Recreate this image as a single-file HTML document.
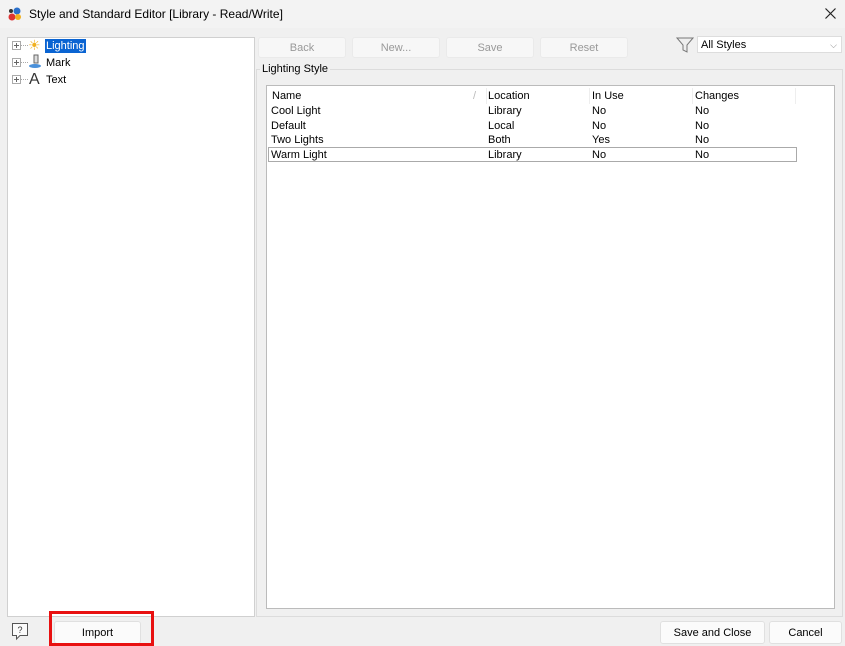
<!DOCTYPE html><html><head><style>
body{margin:0;width:845px;height:646px;background:#f0f0f0;font-family:"Liberation Sans",sans-serif;font-size:11px;color:#000;position:relative;overflow:hidden}
.a{position:absolute}
.btn{position:absolute;background:#fbfbfb;border:1px solid #e0e0e0;border-radius:3px;text-align:center;line-height:20px;box-sizing:border-box}
.dis{background:#f7f7f7;color:#999;border-color:#eaeaea}
.row{position:absolute;left:5px;height:14px;line-height:14px;width:600px}
.row span{position:absolute}
.pl{position:absolute;width:7px;height:7px;border:1px solid #aaa;background:#fff}
.pl:after{content:"";position:absolute;left:1px;top:3px;width:5px;height:1px;background:#666}
.pl:before{content:"";position:absolute;left:3px;top:1px;width:1px;height:5px;background:#666}
</style></head><body>
<div class="a" style="left:0;top:0;width:845px;height:28px;background:#f3f3f3"></div>
<svg class="a" style="left:7px;top:6px" width="16" height="16"><circle cx="5" cy="11" r="3.5" fill="#d33"/><circle cx="10" cy="5" r="3.5" fill="#2a6fc9"/><circle cx="11" cy="11" r="3" fill="#f0b020"/><circle cx="4" cy="5" r="2" fill="#333"/></svg>
<div class="a" style="left:29px;top:7px;font-size:12px">Style and Standard Editor [Library - Read/Write]</div>
<svg class="a" style="left:825px;top:8px" width="11" height="11"><path d="M0.5 0.5L10.5 10.5M10.5 0.5L0.5 10.5" stroke="#222" stroke-width="1.2"/></svg>
<div class="a" style="left:7px;top:37px;width:246px;height:578px;background:#fff;border:1px solid #d0d0d0"></div>
<div class="pl" style="left:12px;top:41px"></div><div class="a" style="left:21px;top:45px;width:7px;border-top:1px dotted #aaa"></div>
<div class="pl" style="left:12px;top:58px"></div><div class="a" style="left:21px;top:62px;width:7px;border-top:1px dotted #aaa"></div>
<div class="pl" style="left:12px;top:75px"></div><div class="a" style="left:21px;top:79px;width:7px;border-top:1px dotted #aaa"></div>
<div class="a" style="left:28px;top:37px;font-size:14px;color:#f0b020">☀</div>
<div class="a" style="left:45px;top:39px;background:#0a64d2;color:#fff;padding:0 1px;height:14px;line-height:14px">Lighting</div>
<svg class="a" style="left:28px;top:54px" width="16" height="15"><rect x="6" y="1" width="4" height="8" fill="#ddd" stroke="#666"/><ellipse cx="7" cy="12" rx="6" ry="2" fill="#4a90d9"/></svg>
<div class="a" style="left:46px;top:57px">Mark</div>
<div class="a" style="left:29px;top:71px;font-size:16px;color:#333">A</div>
<div class="a" style="left:46px;top:74px">Text</div>
<div class="btn dis" style="left:258px;top:37px;width:88px;height:21px">Back</div>
<div class="btn dis" style="left:352px;top:37px;width:88px;height:21px">New...</div>
<div class="btn dis" style="left:446px;top:37px;width:88px;height:21px">Save</div>
<div class="btn dis" style="left:540px;top:37px;width:88px;height:21px">Reset</div>
<svg class="a" style="left:676px;top:37px" width="18" height="16"><path d="M1 1H17L11 8V15L7 13V8Z" fill="#eee" stroke="#777"/></svg>
<div class="a" style="left:697px;top:36px;width:145px;height:17px;background:#fff;border:1px solid #ddd;line-height:17px;padding-left:3px;box-sizing:border-box">All Styles<span style="position:absolute;right:4px;color:#888;font-size:9px">⌵</span></div>
<div class="a" style="left:256px;top:69px;width:585px;height:546px;border:1px solid #dcdcdc"></div>
<div class="a" style="left:260px;top:63px;background:#f0f0f0;padding:0 2px">Lighting Style</div>
<div class="a" style="left:266px;top:85px;width:567px;height:522px;background:#fff;border:1px solid #bbb">
<div class="row" style="top:3px"><span style="left:0">Name</span><span style="left:201px;color:#bbb">/</span><span style="left:216px">Location</span><span style="left:320px">In Use</span><span style="left:423px">Changes</span></div>
<div class="a" style="left:219px;top:2px;height:16px;border-left:1px solid #eee"></div>
<div class="a" style="left:322px;top:2px;height:16px;border-left:1px solid #eee"></div>
<div class="a" style="left:425px;top:2px;height:16px;border-left:1px solid #eee"></div>
<div class="a" style="left:528px;top:2px;height:16px;border-left:1px solid #eee"></div>
<div class="row" style="top:18px"><span style="left:-1px">Cool Light</span><span style="left:216px">Library</span><span style="left:320px">No</span><span style="left:423px">No</span></div>
<div class="row" style="top:33px"><span style="left:-1px">Default</span><span style="left:216px">Local</span><span style="left:320px">No</span><span style="left:423px">No</span></div>
<div class="row" style="top:47px"><span style="left:-1px">Two Lights</span><span style="left:216px">Both</span><span style="left:320px">Yes</span><span style="left:423px">No</span></div>
<div class="a" style="left:1px;top:61px;width:527px;height:13px;border:1px solid #aaa"></div>
<div class="row" style="top:62px"><span style="left:-1px">Warm Light</span><span style="left:216px">Library</span><span style="left:320px">No</span><span style="left:423px">No</span></div>
</div>
<svg class="a" style="left:11px;top:622px" width="18" height="19"><path d="M1.5 1.5H16.5V13.5H9L5.5 17V13.5H1.5Z" fill="#fbfbfb" stroke="#555"/><text x="9" y="11" font-size="9" text-anchor="middle" fill="#333" font-family="Liberation Sans">?</text></svg>
<div class="btn" style="left:54px;top:621px;width:87px;height:23px;line-height:22px">Import</div>
<div class="a" style="left:49px;top:611px;width:105px;height:35px;border:3px solid #e81010;box-sizing:border-box"></div>
<div class="btn" style="left:660px;top:621px;width:105px;height:23px;line-height:22px">Save and Close</div>
<div class="btn" style="left:769px;top:621px;width:73px;height:23px;line-height:22px">Cancel</div>
</body></html>
